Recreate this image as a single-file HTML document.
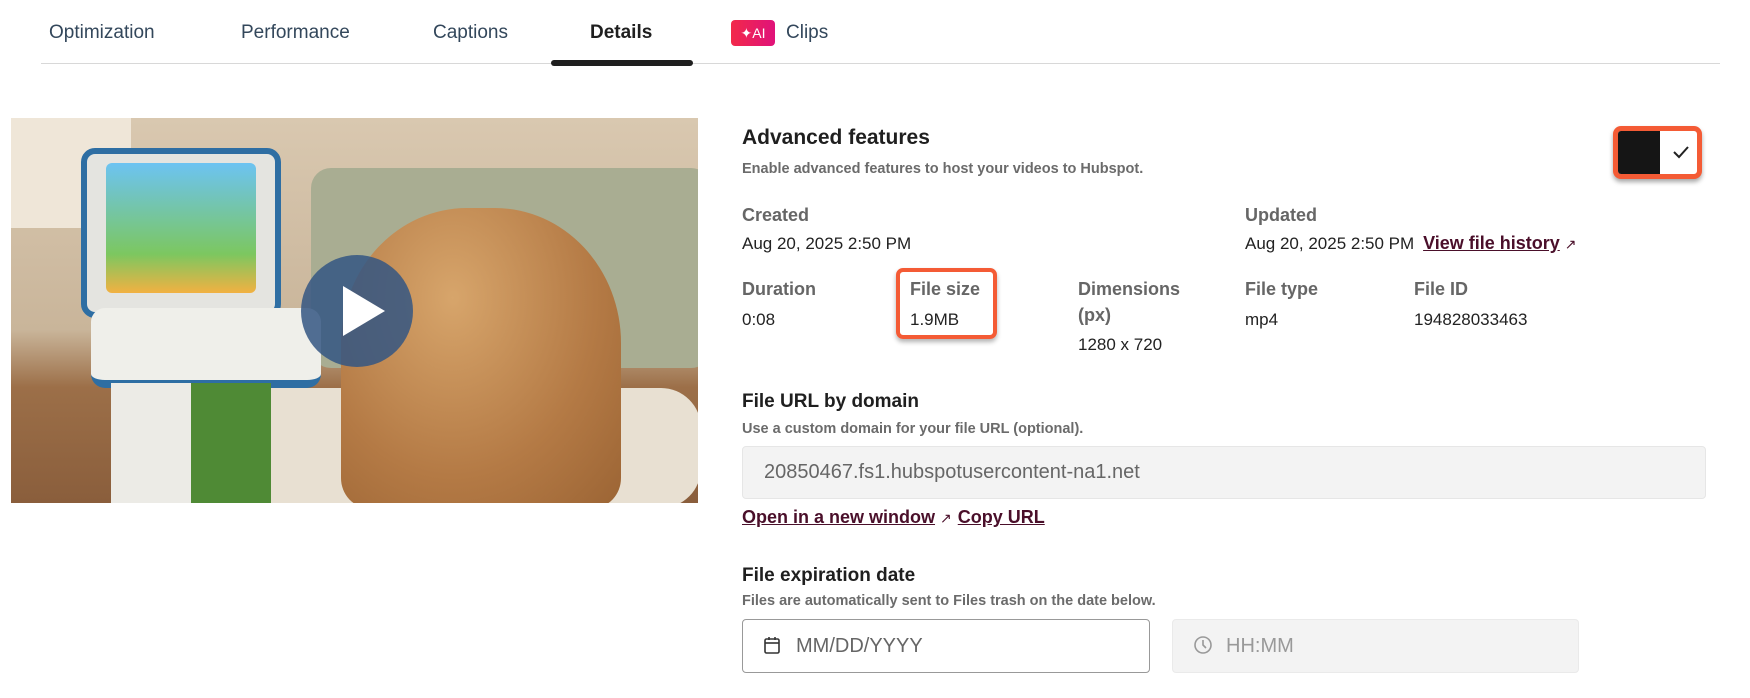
<!DOCTYPE html>
<html><head><style>
*{margin:0;padding:0;box-sizing:border-box}
body{width:1750px;height:698px;background:#fff;font-family:"Liberation Sans",sans-serif;color:#21252b;position:relative;overflow:hidden}
.a{position:absolute;white-space:nowrap}
.tab{font-size:19px;color:#33475b;top:22px}
.h{font-weight:bold;font-size:19px;color:#1f1f1f}
.sub{font-weight:bold;font-size:14.5px;color:#6b6b6b}
.lbl{font-weight:bold;font-size:18px;color:#666}
.val{font-size:17px;color:#222}
.lnk{font-weight:bold;font-size:18px;color:#4a0f2a;text-decoration:underline}
.ext{font-size:14px;color:#4a0f2a;margin:0 6px 0 5px}
</style></head><body>
<div class="a tab" style="left:49px">Optimization</div>
<div class="a tab" style="left:241px">Performance</div>
<div class="a tab" style="left:433px">Captions</div>
<div class="a tab" style="left:590px;font-weight:bold;color:#1f1f1f">Details</div>
<div class="a" style="left:731px;top:20px;width:44px;height:26px;border-radius:4px;background:linear-gradient(90deg,#f2294a,#e0127a);color:#fff;font-size:14px;line-height:26px;text-align:center">✦AI</div>
<div class="a tab" style="left:786px">Clips</div>
<div class="a" style="left:41px;top:63px;width:1679px;height:1px;background:#d8d8d8"></div>
<div class="a" style="left:551px;top:60px;width:142px;height:6px;border-radius:3px;background:#1f1f1f"></div>

<div class="a" style="left:11px;top:118px;width:687px;height:385px;overflow:hidden;background:linear-gradient(180deg,#d9c8b0 0%,#c9b59a 55%,#9c6f48 70%,#8a5e3c 100%)">
 <div class="a" style="left:0;top:0;width:120px;height:110px;background:#efe6d8"></div>
 <div class="a" style="left:300px;top:50px;width:400px;height:200px;background:#a9ad92;border-radius:20px"></div>
 <div class="a" style="left:210px;top:270px;width:480px;height:120px;background:#e8e0d2;border-radius:40px"></div>
 <div class="a" style="left:70px;top:30px;width:200px;height:170px;background:#e4e4e0;border-radius:14px;border:6px solid #2e6ea3"></div>
 <div class="a" style="left:95px;top:45px;width:150px;height:130px;background:linear-gradient(180deg,#6cc3f2,#7cc760 70%,#f2b142);border-radius:6px"></div>
 <div class="a" style="left:80px;top:190px;width:230px;height:80px;background:#efefea;border-radius:14px;border-bottom:8px solid #2e6ea3"></div>
 <div class="a" style="left:100px;top:265px;width:90px;height:120px;background:#ecebe6"></div>
 <div class="a" style="left:180px;top:265px;width:80px;height:120px;background:#4f8a35"></div>
 <div class="a" style="left:330px;top:90px;width:280px;height:300px;background:radial-gradient(ellipse at 40% 30%,#d7a56b,#b47a45 60%,#9b6434);border-radius:45% 45% 10% 10%"></div>
 <div class="a" style="left:290px;top:137px;width:112px;height:112px;border-radius:50%;background:rgba(52,86,130,.85)"></div>
 <div class="a" style="left:332px;top:168px;width:0;height:0;border-left:42px solid #fff;border-top:25px solid transparent;border-bottom:25px solid transparent"></div>
</div>

<div class="a h" style="left:742px;top:126px;font-size:21px">Advanced features</div>
<div class="a sub" style="left:742px;top:161px">Enable advanced features to host your videos to Hubspot.</div>
<div class="a" style="left:1613px;top:126px;width:89px;height:53px;border:5px solid #f45b35;border-radius:8px;box-shadow:0 3px 5px rgba(0,0,0,.35);background:#fff;overflow:hidden">
 <div class="a" style="left:0;top:0;width:42px;height:43px;background:#151515"></div>
 <svg class="a" style="left:54px;top:13px" width="18" height="16" viewBox="0 0 18 16"><path d="M2 8l5 5 9-10" fill="none" stroke="#222" stroke-width="2"/></svg>
</div>

<div class="a lbl" style="left:742px;top:205px">Created</div>
<div class="a val" style="left:742px;top:234px">Aug 20, 2025 2:50 PM</div>
<div class="a lbl" style="left:1245px;top:205px">Updated</div>
<div class="a" style="left:1245px;top:233px"><span class="val">Aug 20, 2025 2:50 PM</span>&nbsp;&nbsp;<span class="lnk">View file history</span><span class="ext">↗</span></div>

<div class="a lbl" style="left:742px;top:279px">Duration</div>
<div class="a val" style="left:742px;top:310px">0:08</div>
<div class="a" style="left:896px;top:268px;width:101px;height:71px;border:4px solid #f45b35;border-radius:7px;box-shadow:0 3px 5px rgba(0,0,0,.3)"></div>
<div class="a lbl" style="left:910px;top:279px">File size</div>
<div class="a val" style="left:910px;top:310px">1.9MB</div>
<div class="a lbl" style="left:1078px;top:279px">Dimensions</div>
<div class="a lbl" style="left:1078px;top:305px">(px)</div>
<div class="a val" style="left:1078px;top:335px">1280 x 720</div>
<div class="a lbl" style="left:1245px;top:279px">File type</div>
<div class="a val" style="left:1245px;top:310px">mp4</div>
<div class="a lbl" style="left:1414px;top:279px">File ID</div>
<div class="a val" style="left:1414px;top:310px">194828033463</div>

<div class="a h" style="left:742px;top:391px">File URL by domain</div>
<div class="a sub" style="left:742px;top:421px">Use a custom domain for your file URL (optional).</div>
<div class="a" style="left:742px;top:446px;width:964px;height:53px;background:#f3f3f3;border:1px solid #e6e6e6;border-radius:4px"></div>
<div class="a" style="left:764px;top:461px;font-size:20px;color:#666">20850467.fs1.hubspotusercontent-na1.net</div>
<div class="a" style="left:742px;top:507px"><span class="lnk">Open in a new window</span><span class="ext">↗</span><span class="lnk">Copy URL</span></div>

<div class="a h" style="left:742px;top:565px">File expiration date</div>
<div class="a sub" style="left:742px;top:593px">Files are automatically sent to Files trash on the date below.</div>
<div class="a" style="left:742px;top:619px;width:408px;height:54px;border:1px solid #999;border-radius:4px"></div>
<svg class="a" style="left:763px;top:635px" width="18" height="20" viewBox="0 0 18 20"><rect x="2" y="4" width="14" height="14" rx="1.5" fill="none" stroke="#333" stroke-width="1.6"/><line x1="2" y1="8" x2="16" y2="8" stroke="#333" stroke-width="1.6"/><line x1="6" y1="2" x2="6" y2="5" stroke="#333" stroke-width="1.6"/><line x1="12" y1="2" x2="12" y2="5" stroke="#333" stroke-width="1.6"/></svg>
<div class="a" style="left:796px;top:635px;font-size:20px;color:#666">MM/DD/YYYY</div>
<div class="a" style="left:1172px;top:619px;width:407px;height:54px;background:#f3f3f3;border:1px solid #eaeaea;border-radius:4px"></div>
<svg class="a" style="left:1193px;top:635px" width="20" height="20" viewBox="0 0 20 20"><circle cx="10" cy="10" r="8" fill="none" stroke="#999" stroke-width="1.6"/><path d="M10 5v5l3 3" fill="none" stroke="#999" stroke-width="1.6"/></svg>
<div class="a" style="left:1226px;top:635px;font-size:20px;color:#999">HH:MM</div>
</body></html>
